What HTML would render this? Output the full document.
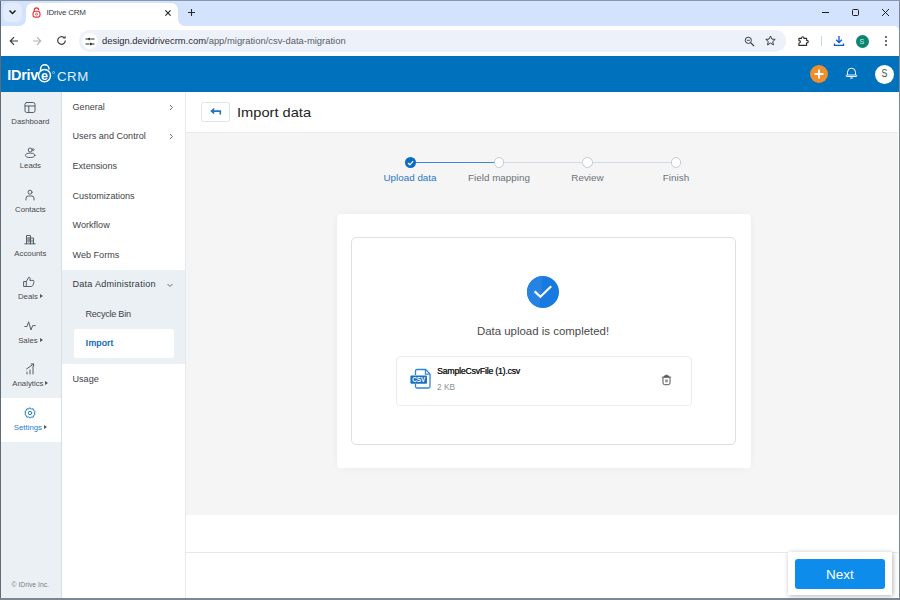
<!DOCTYPE html>
<html><head><meta charset="utf-8">
<style>
*{box-sizing:border-box;margin:0;padding:0}
html,body{width:900px;height:600px;overflow:hidden;background:#fff;font-family:"Liberation Sans",sans-serif;color:#333}
.abs{position:absolute}
#root{position:relative;width:900px;height:600px;overflow:hidden;background:#fff}
#tabstrip{left:0;top:0;width:900px;height:33px;background:#d3e3fd}
#tab{left:26px;top:3.4px;width:152px;height:23px;background:#fff;border-radius:7px 7px 0 0}
#toolbar{left:0;top:25.6px;width:898.5px;height:31px;background:#fff;border-radius:0 5px 0 0}
#urlpill{left:79px;top:30px;width:707px;height:22px;border-radius:11px;background:#edf1fa}
#apphead{left:0;top:56.2px;width:900px;height:35.5px;background:#0071bc}
#nav1{left:1px;top:92px;width:61px;height:506px;background:#ebf0f5;border-right:1px solid #d5dfe8}
#nav2{left:62px;top:92px;width:124px;height:506px;background:#fff;border-right:1px solid #e4eaf0}
#main{left:186px;top:92px;width:712px;height:506px;background:#f5f5f5}
#titlebar{left:0;top:0;width:712px;height:41px;background:#fff;border-bottom:1px solid #e6ebf0}
#foot1{left:0;top:423px;width:712px;height:83px;background:#fff}
#footline{left:0;top:460px;width:712px;height:1px;background:#e4e8f0}
.t{position:absolute;white-space:nowrap;line-height:1}
</style></head><body>
<div id="root">
<div id="tabstrip" class="abs"></div>
<div id="tab" class="abs"></div>
<div id="toolbar" class="abs"></div>
<div id="urlpill" class="abs"></div>
<div id="apphead" class="abs"></div>
<div id="nav1" class="abs"></div>
<div id="nav2" class="abs"></div>

<!-- nav1 items -->
<div class="abs" style="left:1px;top:397.5px;width:60px;height:44.5px;background:#fff"></div>
<style>
.n1{position:absolute;left:0.4px;width:60px;text-align:center;font-size:7.8px;color:#4a4a4a;line-height:1;white-space:nowrap}
.n1 i{display:inline-block;width:0;height:0;border-left:3px solid #555;border-top:2.3px solid transparent;border-bottom:2.3px solid transparent;margin-left:2px;vertical-align:0.3px}
.ic{position:absolute;fill:none;stroke:#55606a;stroke-width:1;stroke-linecap:round;stroke-linejoin:round}
</style>
<svg class="ic" style="left:24px;top:101px" width="12" height="13" viewBox="0 0 12 13"><rect x="1" y="1.5" width="10" height="10" rx="1.8"/><path d="M1 5 H11 M4.8 5 V11.5"/></svg>
<div class="n1" style="top:118px">Dashboard</div>
<svg class="ic" style="left:24px;top:146px" width="13" height="13" viewBox="0 0 13 13"><circle cx="6.2" cy="4" r="2"/><path d="M8.5 3 C10.5 2.2 11 4.4 9 4.6"/><ellipse cx="6.2" cy="9.3" rx="4.7" ry="2.2"/></svg>
<div class="n1" style="top:162px">Leads</div>
<svg class="ic" style="left:24px;top:189px" width="12" height="12" viewBox="0 0 12 12"><circle cx="6" cy="3.2" r="2"/><path d="M2 11 V9.2 A2.2 2.2 0 0 1 4.2 7 H7.8 A2.2 2.2 0 0 1 10 9.2 V11"/></svg>
<div class="n1" style="top:206px">Contacts</div>
<svg class="ic" style="left:24px;top:234px" width="12" height="11" viewBox="0 0 12 11"><path d="M0.8 9.8 H11.2 M2.5 9.8 V1.5 H6.5 V9.8 M6.5 4 H9.5 V9.8 M4 3.5 V8 M5.2 3.5 V8 M8 6 V8"/></svg>
<div class="n1" style="top:249.5px">Accounts</div>
<svg class="ic" style="left:23px;top:276px" width="12" height="12" viewBox="0 0 12 12"><path d="M1 5.5 H3.3 V10.5 H1 Z M3.3 5.5 L5.8 1.2 C7.3 1.2 7.3 2.8 6.8 4.4 H10 C11.2 4.4 11.2 5.6 10.8 6.6 L9.8 9.6 C9.5 10.3 9 10.5 8.3 10.5 H3.3"/></svg>
<div class="n1" style="top:292.5px">Deals<i></i></div>
<svg class="ic" style="left:24px;top:320px" width="12" height="12" viewBox="0 0 12 12"><path d="M0.8 6.5 H3 L4.6 1.8 L7 10 L8.6 5.6 H11.2"/></svg>
<div class="n1" style="top:336.5px">Sales<i></i></div>
<svg class="ic" style="left:25px;top:363px" width="12" height="12" viewBox="0 0 12 12"><path d="M2 11 V9 M5 11 V7 M8 11 V3.5 M1.5 6 L8.5 1 M6.2 1 H8.6 V3.2"/></svg>
<div class="n1" style="top:379.5px">Analytics<i></i></div>
<svg class="ic" style="left:24px;top:407px;stroke:#1f7fd0" width="12" height="12" viewBox="0 0 12 12"><circle cx="6" cy="6" r="1.7"/><path d="M6 0.9 L7.4 2 L9.2 1.8 L9.6 3.5 L11.1 4.5 L10.4 6 L11.1 7.5 L9.6 8.5 L9.2 10.2 L7.4 10 L6 11.1 L4.6 10 L2.8 10.2 L2.4 8.5 L0.9 7.5 L1.6 6 L0.9 4.5 L2.4 3.5 L2.8 1.8 L4.6 2 Z"/></svg>
<div class="n1" style="top:423.5px;color:#1f7fd0">Settings<i></i></div>
<div class="t" style="left:11.5px;top:581.5px;font-size:6.8px;color:#7a7f85">© IDrive Inc.</div>

<!-- nav2 items -->
<div class="abs" style="left:62px;top:269.5px;width:123px;height:94px;background:#ebf0f5"></div>
<div class="abs" style="left:73.5px;top:329px;width:100.5px;height:29px;background:#fff;border-radius:3px"></div>
<style>
.n2{position:absolute;left:72.5px;font-size:9.1px;color:#3f4347;line-height:1;white-space:nowrap}
.ch{position:absolute;fill:none;stroke:#6a7077;stroke-width:1}
</style>
<div class="n2" style="top:102.8px">General</div>
<svg class="ch" style="left:168.5px;top:103.8px" width="5" height="7" viewBox="0 0 5 7"><path d="M1 1 L3.4 3.5 L1 6"/></svg>
<div class="n2" style="top:132.3px">Users and Control</div>
<svg class="ch" style="left:168.5px;top:133.3px" width="5" height="7" viewBox="0 0 5 7"><path d="M1 1 L3.4 3.5 L1 6"/></svg>
<div class="n2" style="top:161.8px">Extensions</div>
<div class="n2" style="top:192px">Customizations</div>
<div class="n2" style="top:221.3px">Workflow</div>
<div class="n2" style="top:250.8px">Web Forms</div>
<div class="n2" style="top:280.3px;letter-spacing:0.23px;color:#34383c">Data Administration</div>
<svg class="ch" style="left:166px;top:283px" width="8" height="5" viewBox="0 0 8 5"><path d="M1.5 1 L4 3.5 L6.5 1"/></svg>
<div class="n2" style="top:309.8px;left:85.5px;letter-spacing:-0.25px">Recycle Bin</div>
<div class="n2" style="top:339.3px;left:85.5px;color:#1a6fc0;letter-spacing:0.35px;text-shadow:0.3px 0 0 #1a6fc0">Import</div>
<div class="n2" style="top:374.8px">Usage</div>
<div id="main" class="abs">
  <div id="titlebar" class="abs"></div>
  <div id="foot1" class="abs"></div>
  <div id="footline" class="abs"></div>
</div>

<!-- tab search button -->
<div class="abs" style="left:3px;top:3px;width:19px;height:19px;border-radius:6px;background:#e3ecfc"></div>
<svg class="abs" style="left:8px;top:9px" width="9" height="7" viewBox="0 0 9 7"><path d="M1.5 1.5 L4.5 4.5 L7.5 1.5" fill="none" stroke="#1f1f1f" stroke-width="1.5"/></svg>
<!-- tab curve-outs -->
<svg class="abs" style="left:19px;top:18.6px" width="7" height="7" viewBox="0 0 7 7"><path d="M7 0 V7 H0 A7 7 0 0 0 7 0Z" fill="#fff"/></svg>
<svg class="abs" style="left:178px;top:18.6px" width="7" height="7" viewBox="0 0 7 7"><path d="M0 0 V7 H7 A7 7 0 0 1 0 0Z" fill="#fff"/></svg>
<!-- favicon -->
<svg class="abs" style="left:32px;top:7px" width="9" height="11" viewBox="0 0 9 11"><path d="M2.2 4.6 V3.2 A2.3 2.3 0 0 1 6.8 3.2" fill="none" stroke="#e8303a" stroke-width="1.1"/><rect x="1" y="4.3" width="7" height="5.8" rx="2.4" fill="none" stroke="#e8303a" stroke-width="1.1"/><circle cx="4.5" cy="7.2" r="1" fill="none" stroke="#e8303a" stroke-width="0.8"/></svg>
<div class="t" style="left:46.5px;top:9px;font-size:8px;color:#3a3d42;letter-spacing:-0.2px">IDrive CRM</div>
<svg class="abs" style="left:163.5px;top:8.5px" width="8" height="8" viewBox="0 0 8 8"><path d="M1.4 1.4 L6.6 6.6 M6.6 1.4 L1.4 6.6" stroke="#1f1f1f" stroke-width="1.1"/></svg>
<svg class="abs" style="left:186.9px;top:8px" width="9" height="9" viewBox="0 0 9 9"><path d="M4.5 1 V8 M1 4.5 H8" stroke="#2a2a2a" stroke-width="1.1"/></svg>
<!-- window controls -->
<div class="abs" style="left:822px;top:12px;width:7px;height:1px;background:#1f1f1f"></div>
<div class="abs" style="left:852px;top:9px;width:7px;height:7px;border:1px solid #1f1f1f;border-radius:1.5px"></div>
<svg class="abs" style="left:881px;top:8px" width="9" height="9" viewBox="0 0 9 9"><path d="M1 1 L8 8 M8 1 L1 8" stroke="#1f1f1f" stroke-width="1"/></svg>
<!-- toolbar icons -->
<svg class="abs" style="left:9px;top:36px" width="10" height="10" viewBox="0 0 10 10"><path d="M9 5 H1.5 M5 1.2 L1.3 5 L5 8.8" fill="none" stroke="#3c3c3c" stroke-width="1.2"/></svg>
<svg class="abs" style="left:32px;top:36px" width="10" height="10" viewBox="0 0 10 10"><path d="M1 5 H8.5 M5 1.2 L8.7 5 L5 8.8" fill="none" stroke="#b4b4b4" stroke-width="1.2"/></svg>
<svg class="abs" style="left:56px;top:35px" width="11" height="11" viewBox="0 0 11 11"><path d="M9.3 5.5 A3.8 3.8 0 1 1 8 2.6" fill="none" stroke="#3c3c3c" stroke-width="1.2"/><path d="M9.6 0.8 V3.6 H6.8 Z" fill="#3c3c3c"/></svg>
<div class="abs" style="left:82px;top:33px;width:16px;height:16px;border-radius:8px;background:#fff"></div>
<svg class="abs" style="left:85px;top:37px" width="10" height="9" viewBox="0 0 10 9"><path d="M0.5 2 H3 M6 2 H9.5 M0.5 7 H4 M7 7 H9.5" stroke="#2a2a2a" stroke-width="1.2"/><circle cx="4.3" cy="2" r="1.2" fill="#2a2a2a"/><circle cx="5.8" cy="7" r="1.2" fill="#2a2a2a"/></svg>
<div class="t" style="left:102px;top:36px;font-size:9.42px;color:#2b2b33">design.devidrivecrm.com<span style="color:#5b5e66">/app/migration/csv-data-migration</span></div>
<svg class="abs" style="left:744px;top:36px" width="11" height="11" viewBox="0 0 11 11"><circle cx="4.3" cy="4.3" r="3.1" fill="none" stroke="#3c3c3c" stroke-width="1"/><path d="M6.6 6.6 L10 10" stroke="#3c3c3c" stroke-width="1.2"/><path d="M2.8 4.3 H5.8" stroke="#3c3c3c" stroke-width="0.9"/></svg>
<svg class="abs" style="left:765px;top:35px" width="11" height="11" viewBox="0 0 11 11"><path d="M5.5 1 L6.9 4.1 L10.2 4.4 L7.7 6.6 L8.5 9.9 L5.5 8.1 L2.5 9.9 L3.3 6.6 L0.8 4.4 L4.1 4.1 Z" fill="none" stroke="#3c3c3c" stroke-width="1" stroke-linejoin="round"/></svg>
<svg class="abs" style="left:797px;top:35px" width="12" height="12" viewBox="0 0 12 12"><path d="M1.9 3.4 H4.5 V3 A1.25 1.25 0 0 1 7 3 V3.4 H9.6 V5.4 H10 A1.25 1.25 0 0 1 10 7.9 H9.6 V10.4 H1.9 V8 H2.2 A1.2 1.2 0 0 0 2.2 5.6 H1.9 Z" fill="none" stroke="#2f2f2f" stroke-width="1.15" stroke-linejoin="round"/></svg>
<div class="abs" style="left:821px;top:36px;width:1px;height:10px;background:#c5d5f3"></div>
<svg class="abs" style="left:833px;top:35px" width="12" height="12" viewBox="0 0 12 12"><path d="M6 1 V7.5 M3.2 4.8 L6 7.6 L8.8 4.8" fill="none" stroke="#0b57d0" stroke-width="1.3"/><path d="M1.5 8.5 V10.3 H10.5 V8.5" fill="none" stroke="#0b57d0" stroke-width="1.3"/></svg>
<div class="abs" style="left:855.5px;top:34.5px;width:13px;height:13px;border-radius:7px;background:#0b8571"></div>
<div class="t" style="left:859.5px;top:37.5px;font-size:7px;color:#d8f0ea">S</div>
<div class="abs" style="left:885px;top:36px;width:2px;height:2px;border-radius:1px;background:#3c3c3c;box-shadow:0 4px 0 #3c3c3c,0 8px 0 #3c3c3c"></div>
<!-- app header content -->
<div class="t" style="left:7.3px;top:67.8px;font-size:14.5px;font-weight:bold;color:#fff;letter-spacing:-0.3px">IDriv</div>
<svg class="abs" style="left:37px;top:63px" width="15" height="20" viewBox="0 0 15 20"><path d="M3.6 8.2 V6 A4.2 4.2 0 0 1 12 6 V6.6" fill="none" stroke="#fff" stroke-width="1.5"/><ellipse cx="7.5" cy="12.6" rx="6" ry="6.2" fill="none" stroke="#fff" stroke-width="1.5"/><text x="7.5" y="16.6" text-anchor="middle" font-family="Liberation Sans, sans-serif" font-weight="bold" font-size="12.5" fill="#fff">e</text></svg>
<div class="abs" style="left:51.8px;top:70.6px;width:3.4px;height:3.4px;border-radius:2px;border:0.7px solid #9cc6e6"></div>
<div class="t" style="left:56.5px;top:70.7px;font-size:12px;color:#fff;letter-spacing:0.5px;font-weight:normal;opacity:.9;transform:scaleX(1.1);transform-origin:0 0">CRM</div>
<div class="abs" style="left:809.5px;top:65px;width:18px;height:18px;border-radius:9px;background:#ee8e2c"></div>
<svg class="abs" style="left:813.5px;top:69px" width="10" height="10" viewBox="0 0 10 10"><path d="M5 0.5 V9.5 M0.5 5 H9.5" stroke="#fff" stroke-width="1.8"/></svg>
<svg class="abs" style="left:845px;top:67px" width="13" height="13" viewBox="0 0 13 13"><path d="M2.5 8 V5.2 A4 4 0 0 1 10.5 5.2 V8" fill="none" stroke="#fff" stroke-width="1"/><rect x="1.2" y="8" width="10.6" height="1.5" rx="0.5" fill="none" stroke="#fff" stroke-width="0.9"/><path d="M5.3 11 H7.7" stroke="#fff" stroke-width="1.2"/></svg>
<div class="abs" style="left:874.5px;top:64.5px;width:19px;height:19px;border-radius:10px;background:#fff"></div>
<div class="t" style="left:880.7px;top:69px;font-size:10px;color:#4a4a4a;transform:scaleX(.88);transform-origin:50% 50%">S</div>

<!-- main content (page coords) -->
<div class="abs" style="left:201px;top:102px;width:28.5px;height:20px;border:1px solid #dde3e9;border-radius:2.5px;background:#fff"></div>
<svg class="abs" style="left:209px;top:107px" width="13" height="9" viewBox="0 0 13 9"><path d="M5.2 0.8 L1.2 4.1 L5.2 7.4 Z" fill="#1f72c4"/><path d="M4.5 4.1 H11.3 V7.6" fill="none" stroke="#1f72c4" stroke-width="1.6"/></svg>
<div class="t" style="left:237px;top:105.8px;font-size:13.5px;color:#222;transform:scaleX(1.085);transform-origin:0 0">Import data</div>
<!-- stepper -->
<div class="abs" style="left:410px;top:162px;width:89px;height:1.3px;background:#3b8ad0"></div>
<div class="abs" style="left:499px;top:162.1px;width:177px;height:1px;background:#d4dbe2"></div>
<div class="abs" style="left:404.8px;top:157.2px;width:10.8px;height:10.8px;border-radius:6px;background:#0b6cc4"></div>
<svg class="abs" style="left:406.7px;top:159.7px" width="7" height="6" viewBox="0 0 7 6"><path d="M1 3 L2.9 4.8 L6.2 1.2" fill="none" stroke="#fff" stroke-width="1.2"/></svg>
<div class="abs" style="left:493.7px;top:157.2px;width:10.6px;height:10.6px;border-radius:6px;background:#fff;border:1px solid #c3ccd6"></div>
<div class="abs" style="left:582.2px;top:157.2px;width:10.6px;height:10.6px;border-radius:6px;background:#fff;border:1px solid #c3ccd6"></div>
<div class="abs" style="left:670.7px;top:157.2px;width:10.6px;height:10.6px;border-radius:6px;background:#fff;border:1px solid #c3ccd6"></div>
<style>.st{position:absolute;width:120px;text-align:center;font-size:9.85px;color:#6d7379;line-height:1;white-space:nowrap;top:173.2px}</style>
<div class="st" style="left:350px;color:#2a78c4">Upload data</div>
<div class="st" style="left:439px">Field mapping</div>
<div class="st" style="left:527.5px">Review</div>
<div class="st" style="left:616px">Finish</div>
<!-- card -->
<div class="abs" style="left:336.5px;top:213.5px;width:414px;height:254px;background:#fff;border-radius:4px;box-shadow:0 0 9px rgba(0,0,0,.045)"></div>
<div class="abs" style="left:351px;top:237px;width:385px;height:207.5px;border:1px solid #dfdfdf;border-radius:5px;background:#fff"></div>
<svg class="abs" style="left:527px;top:276px" width="32" height="32" viewBox="0 0 32 32"><circle cx="16" cy="16" r="16" fill="#167ae0"/><path d="M15 0.03 A16 16 0 0 0 12 31.49 L14.4 16 Z" fill="#2783e2"/><path d="M7.6 15.4 L13.4 20.8 L24.2 10.2" fill="none" stroke="#fff" stroke-width="2.2"/></svg>
<div class="t" style="left:393px;width:300px;text-align:center;top:325.5px;font-size:11.45px;color:#4a4a4a">Data upload is completed!</div>
<div class="abs" style="left:396px;top:356px;width:295.5px;height:49.5px;border:1px solid #ececec;border-radius:4px;background:#fff"></div>
<!-- csv icon -->
<svg class="abs" style="left:409px;top:367px" width="23" height="24" viewBox="0 0 23 24"><path d="M6.5 8 V4 A1.5 1.5 0 0 1 8 2.5 H16.6 L21 6.9 V19.5 A1.5 1.5 0 0 1 19.5 21 H8 A1.5 1.5 0 0 1 6.5 19.5 V17" fill="none" stroke="#2a86d8" stroke-width="1.3"/><path d="M16.4 2.7 V7.1 H20.8" fill="none" stroke="#2a86d8" stroke-width="1.1"/><rect x="1.4" y="8.4" width="16.6" height="8.3" rx="1" fill="#1a70c4"/><text x="9.7" y="15" text-anchor="middle" font-family="Liberation Sans, sans-serif" font-weight="bold" font-size="6.4" fill="#fff">CSV</text></svg>
<div class="t" style="left:437px;top:366.5px;font-size:8.7px;color:#1e1e1e;font-weight:normal;letter-spacing:-0.19px;text-shadow:0.35px 0 0 #1e1e1e">SampleCsvFile (1).csv</div>
<div class="t" style="left:437px;top:383px;font-size:8.3px;color:#8a8f94">2 KB</div>
<svg class="abs" style="left:660.5px;top:374.3px" width="11" height="12" viewBox="0 0 11 12"><path d="M0.8 3.2 H10.2 M2.9 3 C3.4 0.6 7.6 0.6 8.1 3 Z" fill="#666" stroke="#555" stroke-width="0.9" stroke-linejoin="round"/><path d="M2 3.4 V9 A1.7 1.7 0 0 0 3.7 10.7 H7.3 A1.7 1.7 0 0 0 9 9 V3.4" fill="none" stroke="#555" stroke-width="1"/><rect x="4.1" y="5.5" width="2.8" height="2.8" fill="#999"/></svg>
<!-- next highlight + button -->
<div class="abs" style="left:788px;top:552px;width:104px;height:43px;background:#fff;box-shadow:1px 1px 5px rgba(0,0,0,.3)"></div>
<div class="abs" style="left:795px;top:559px;width:90px;height:30px;border-radius:3px;background:#0d8cec"></div>
<div class="t" style="left:795px;width:90px;text-align:center;top:567.8px;font-size:13.5px;color:#fff">Next</div>
<!-- window borders -->
<div class="abs" style="left:0;top:0;width:1px;height:600px;background:#5f6b76"></div>
<div class="abs" style="left:898.5px;top:0;width:1.5px;height:600px;background:#7d8791"></div>
<div class="abs" style="left:0;top:597.6px;width:900px;height:2.4px;background:#7d8791"></div>
<div class="abs" style="left:0;top:0;width:900px;height:1px;background:#8a97a8"></div>
</div>
</body></html>
